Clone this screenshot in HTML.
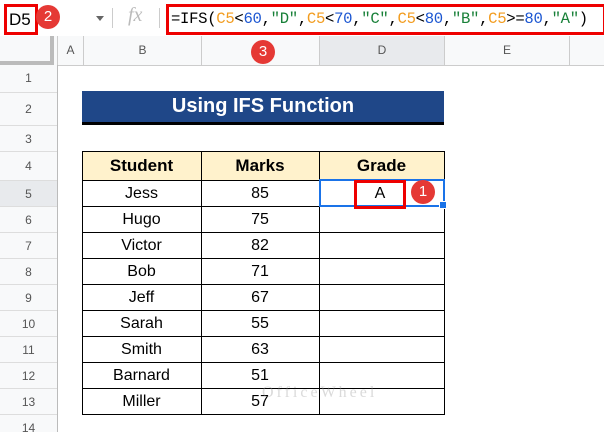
<!DOCTYPE html><html><head><style>
body{margin:0;width:604px;height:432px;overflow:hidden;background:#fff;font-family:"Liberation Sans",Arial,sans-serif;position:relative}
.a{position:absolute}
.hd{background:#f8f9fa;color:#555;font-size:12px;text-align:center;box-sizing:border-box}
.num{left:0;width:57px;text-align:center;font-size:12px;color:#555}
.circ{border-radius:50%;background:#e53935;color:#fff;width:24px;height:24px;font-size:15px;text-align:center;line-height:24px}
.c{position:absolute;text-align:center;font-size:16px;color:#000;height:26px;line-height:26px}
.hl{position:absolute;left:82px;width:363px;height:1px;background:#000}
.vl{position:absolute;top:151px;width:1px;height:264px;background:#000}
</style></head><body>
<div class="a" style="left:0;top:0;width:604px;height:36px;background:#fff;border-bottom:1px solid #ddd"></div>
<div class="a" style="left:4px;top:4px;width:26px;height:25px;border:3px solid #e00;font-size:17px;line-height:25px;padding-left:2px;box-sizing:content-box">D5</div>
<div class="a circ" style="left:36px;top:5px">2</div>
<div class="a" style="left:96px;top:16px;width:0;height:0;border-left:4px solid transparent;border-right:4px solid transparent;border-top:5px solid #666"></div>
<div class="a" style="left:112px;top:8px;width:1px;height:20px;background:#ccc"></div>
<div class="a" style="left:128px;top:4px;font-family:'Liberation Serif',serif;font-style:italic;font-size:20px;color:#bbb">fx</div>
<div class="a" style="left:159px;top:8px;width:1px;height:20px;background:#ccc"></div>
<div class="a" style="left:166px;top:4px;width:432px;height:25px;border:3px solid #e00;font-family:'Liberation Mono',monospace;font-size:15.6px;line-height:25px;padding-left:2px;white-space:nowrap;letter-spacing:-0.3px;overflow:hidden">=IFS(<span style="color:#f29c1f">C5</span>&lt;<span style="color:#1a55d1">60</span>,<span style="color:#188038">"D"</span>,<span style="color:#f29c1f">C5</span>&lt;<span style="color:#1a55d1">70</span>,<span style="color:#188038">"C"</span>,<span style="color:#f29c1f">C5</span>&lt;<span style="color:#1a55d1">80</span>,<span style="color:#188038">"B"</span>,<span style="color:#f29c1f">C5</span>&gt;=<span style="color:#1a55d1">80</span>,<span style="color:#188038">"A"</span>)</div>
<div class="a" style="left:0;top:36px;width:604px;height:29px;background:#f8f9fa;border-bottom:1px solid #ccc"></div>
<div class="a" style="left:0;top:36px;width:50px;height:25px;border-right:4px solid #bbb;border-bottom:4px solid #bbb;background:#f8f9fa"></div>
<div class="a hd" style="left:57px;top:36px;width:26px;height:29px;line-height:29px;border-left:1px solid #ccc">A</div>
<div class="a hd" style="left:83px;top:36px;width:118px;height:29px;line-height:29px;border-left:1px solid #ccc">B</div>
<div class="a hd" style="left:201px;top:36px;width:118px;height:29px;line-height:29px;border-left:1px solid #ccc">C</div>
<div class="a hd" style="left:319px;top:36px;width:125px;height:29px;line-height:29px;border-left:1px solid #ccc;background:#e8eaed">D</div>
<div class="a hd" style="left:444px;top:36px;width:126px;height:29px;line-height:29px;border-left:1px solid #ccc;border-right:1px solid #ccc">E</div>
<div class="a circ" style="left:251px;top:40px">3</div>
<div class="a" style="left:0;top:65px;width:57px;height:367px;background:#f8f9fa;border-right:1px solid #bbb"></div>
<div class="a" style="left:0;top:180px;width:57px;height:26px;background:#e8eaed"></div>
<div class="a num" style="top:65px;line-height:27px">1</div>
<div class="a num" style="top:92px;line-height:33px;border-top:1px solid #ddd">2</div>
<div class="a num" style="top:125px;line-height:26px;border-top:1px solid #ddd">3</div>
<div class="a num" style="top:151px;line-height:29px;border-top:1px solid #ddd">4</div>
<div class="a num" style="top:180px;line-height:26px;border-top:1px solid #ddd">5</div>
<div class="a num" style="top:206px;line-height:26px;border-top:1px solid #ddd">6</div>
<div class="a num" style="top:232px;line-height:26px;border-top:1px solid #ddd">7</div>
<div class="a num" style="top:258px;line-height:26px;border-top:1px solid #ddd">8</div>
<div class="a num" style="top:284px;line-height:26px;border-top:1px solid #ddd">9</div>
<div class="a num" style="top:310px;line-height:26px;border-top:1px solid #ddd">10</div>
<div class="a num" style="top:336px;line-height:26px;border-top:1px solid #ddd">11</div>
<div class="a num" style="top:362px;line-height:26px;border-top:1px solid #ddd">12</div>
<div class="a num" style="top:388px;line-height:26px;border-top:1px solid #ddd">13</div>
<div class="a num" style="top:414px;line-height:26px;border-top:1px solid #ddd">14</div>
<div class="a" style="left:82px;top:91px;width:362px;height:31px;background:#1f4788;border-bottom:3px solid #000;color:#fff;font-weight:bold;font-size:20px;line-height:31px;text-align:center">Using IFS Function</div>
<div class="a" style="left:82px;top:151px;width:363px;height:29px;background:#fff2cc"></div>
<div class="c" style="left:82px;top:152px;width:119px;font-weight:bold;font-size:17px;line-height:28px">Student</div>
<div class="c" style="left:201px;top:152px;width:118px;font-weight:bold;font-size:17px;line-height:28px">Marks</div>
<div class="c" style="left:319px;top:152px;width:125px;font-weight:bold;font-size:17px;line-height:28px">Grade</div>
<div class="hl" style="top:151px"></div><div class="hl" style="top:180px"></div><div class="hl" style="top:206px"></div><div class="hl" style="top:232px"></div><div class="hl" style="top:258px"></div><div class="hl" style="top:284px"></div><div class="hl" style="top:310px"></div><div class="hl" style="top:336px"></div><div class="hl" style="top:362px"></div><div class="hl" style="top:388px"></div><div class="hl" style="top:414px"></div>
<div class="vl" style="left:82px"></div><div class="vl" style="left:201px"></div><div class="vl" style="left:319px"></div><div class="vl" style="left:444px"></div>
<div class="c" style="left:82px;top:181px;width:119px">Jess</div><div class="c" style="left:201px;top:181px;width:118px">85</div>
<div class="c" style="left:82px;top:207px;width:119px">Hugo</div><div class="c" style="left:201px;top:207px;width:118px">75</div>
<div class="c" style="left:82px;top:233px;width:119px">Victor</div><div class="c" style="left:201px;top:233px;width:118px">82</div>
<div class="c" style="left:82px;top:259px;width:119px">Bob</div><div class="c" style="left:201px;top:259px;width:118px">71</div>
<div class="c" style="left:82px;top:285px;width:119px">Jeff</div><div class="c" style="left:201px;top:285px;width:118px">67</div>
<div class="c" style="left:82px;top:311px;width:119px">Sarah</div><div class="c" style="left:201px;top:311px;width:118px">55</div>
<div class="c" style="left:82px;top:337px;width:119px">Smith</div><div class="c" style="left:201px;top:337px;width:118px">63</div>
<div class="c" style="left:82px;top:363px;width:119px">Barnard</div><div class="c" style="left:201px;top:363px;width:118px">51</div>
<div class="c" style="left:82px;top:389px;width:119px">Miller</div><div class="c" style="left:201px;top:389px;width:118px">57</div>
<div class="a" style="left:319px;top:179px;width:122px;height:24px;border:2px solid #1a73e8"></div>
<div class="c" style="left:354px;top:181px;width:52px">A</div>
<div class="a" style="left:439px;top:201px;width:6px;height:6px;background:#1a73e8;border:1px solid #fff"></div>
<div class="a" style="left:354px;top:180px;width:46px;height:23px;border:3px solid #e00"></div>
<div class="a circ" style="left:411px;top:180px">1</div>
<div class="a" style="left:262px;top:384px;font-family:'Liberation Serif',serif;font-size:16px;letter-spacing:3px;color:rgba(150,150,150,0.35)">OfficeWheel</div>
</body></html>
